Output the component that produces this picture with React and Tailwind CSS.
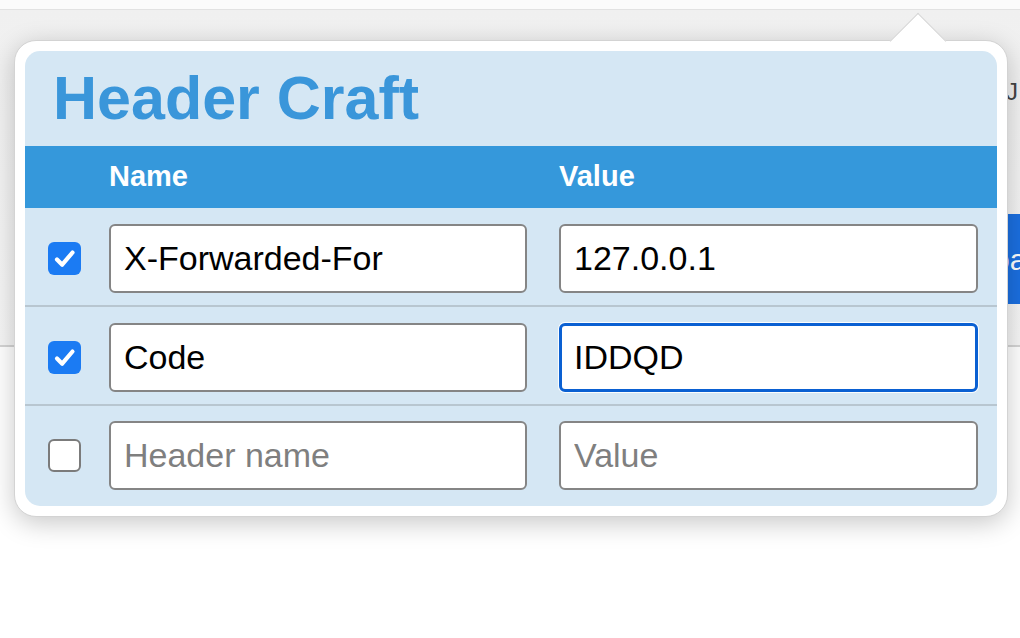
import { useState } from 'react';

const rows = [
  { id: 1, enabled: true, name: 'X-Forwarded-For', value: '127.0.0.1' },
  { id: 2, enabled: true, name: 'Code', value: 'IDDQD', focused: true },
  { id: 3, enabled: false, name: '', value: '' },
];

function Checkbox({ checked, onChange }) {
  if (checked) {
    return (
      <button
        type="button"
        onClick={onChange}
        className="flex h-[33px] w-[33px] shrink-0 items-center justify-center rounded-[6px] bg-[#1b7bf3]"
      >
        <svg viewBox="0 0 33 33" className="h-[33px] w-[33px]" fill="none" stroke="white" strokeWidth="4.2" strokeLinecap="round" strokeLinejoin="round">
          <path d="M9 17.5l5.2 5.2L24.5 10.5" />
        </svg>
      </button>
    );
  }
  return (
    <button
      type="button"
      onClick={onChange}
      className="h-[33px] w-[33px] shrink-0 rounded-[6px] border-2 border-[#7b7b7b] bg-white"
    />
  );
}

function HeaderRow({ row, last, onToggle }) {
  return (
    <div
      className={
        last
          ? 'flex items-center pl-[23px] pt-[15px] pb-[16px]'
          : 'flex items-center border-b-2 border-[#b8c6d0] pl-[23px] pt-[16px] pb-[12px]'
      }
    >
      <Checkbox checked={row.enabled} onChange={onToggle} />
      <input
        defaultValue={row.name}
        placeholder="Header name"
        className="ml-[28px] h-[69px] w-[418px] rounded-[6px] border-2 border-[#858585] bg-white pl-[13px] text-[34px] text-black outline-none placeholder:text-[#7f7f7f]"
      />
      <input
        defaultValue={row.value}
        placeholder="Value"
        className={
          row.focused
            ? 'ml-[32px] h-[69px] w-[419px] rounded-[6px] border-[3px] border-[#0a60d2] bg-white pl-[12px] text-[34px] text-black shadow-[0_0_0_1px_rgba(255,255,255,0.9)] outline-none'
            : 'ml-[32px] h-[69px] w-[419px] rounded-[6px] border-2 border-[#858585] bg-white pl-[13px] text-[34px] text-black outline-none placeholder:text-[#7f7f7f]'
        }
      />
    </div>
  );
}

export default function App() {
  const [headers, setHeaders] = useState(rows);

  const toggle = (id) =>
    setHeaders((list) => list.map((h) => (h.id === id ? { ...h, enabled: !h.enabled } : h)));

  return (
    <div className="relative h-[638px] w-[1020px] overflow-hidden bg-white font-['Liberation_Sans',Arial,sans-serif]">
      {/* page behind the popup */}
      <div className="h-[10px] border-b border-[#e2e2e2] bg-[#fbfbfb]" />
      <div className="flex h-[337px] flex-col items-end border-b-2 border-[#d4d4d4] bg-gradient-to-b from-[#f0f0f0] to-[#f6f6f6]">
        <span className="mt-[70px] mr-[2px] text-[24px] leading-none text-[#444]">J</span>
        <div className="mt-[110px] -mr-[53px] flex h-[90px] w-[68px] items-center overflow-hidden bg-[#1b6fe0] text-[30px] text-white">
          <span className="-ml-[12px]">oad</span>
        </div>
      </div>

      {/* popup */}
      <div className="absolute left-[14px] top-[40px] w-[994px] rounded-[22px] border border-[#d3d3d3] bg-white p-[10px] shadow-[0_6px_26px_rgba(0,0,0,0.22)]">
        <div className="absolute left-[883px] top-[-20px] h-[40px] w-[40px] rotate-45 border-t border-l border-[#d3d3d3] bg-white" />
        <div className="relative z-10 overflow-hidden rounded-[15px] bg-[#d5e7f4]">
          <div className="flex h-[95px] items-center pl-[28px]">
            <h1 className="text-[61px] font-bold leading-none text-[#3a96da]">Header Craft</h1>
          </div>
          <div className="flex h-[62px] items-center bg-[#3598db] pl-[84px] text-[29px] font-bold text-white">
            <span className="w-[450px]">Name</span>
            <span>Value</span>
          </div>
          {headers.map((row, i) => (
            <HeaderRow key={row.id} row={row} last={i === headers.length - 1} onToggle={() => toggle(row.id)} />
          ))}
        </div>
      </div>
    </div>
  );
}
